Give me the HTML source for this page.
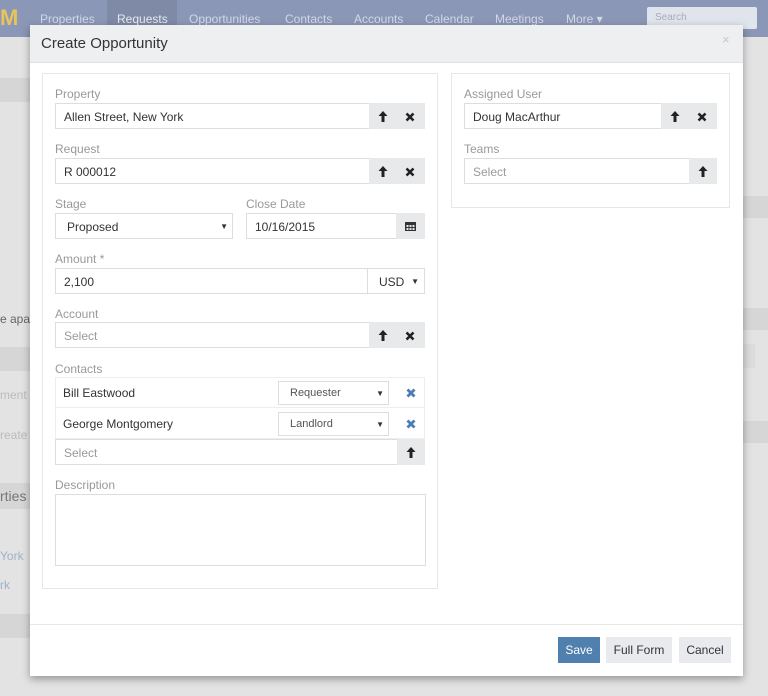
<!DOCTYPE html>
<html><head><style>
*{box-sizing:border-box;margin:0;padding:0}
body{width:768px;height:696px;overflow:hidden;background:#e3e3e3;font-family:"Liberation Sans",sans-serif;position:relative}
.a{position:absolute}
.nav{left:0;top:0;width:768px;height:37px;background:#8b97b6}
.nav span{position:absolute;top:12px;font-size:12px;color:#d3d8e6}
.lbl{position:absolute;font-size:12px;color:#999}
.inp{position:absolute;height:26px;border:1px solid #ddd;background:#fff;font-size:12px;color:#333;padding:6px 8px;white-space:nowrap}
.btn{position:absolute;height:26px;background:#e8e9eb}
.btn svg{position:absolute;top:8px}
.ph{color:#999}
</style></head><body>
<svg width="0" height="0" style="position:absolute"><defs>
<symbol id="up" viewBox="0 0 10 11"><path d="M5 0 L9.5 5 L6.5 5 L6.5 11 L3.5 11 L3.5 5 L0.5 5 Z" fill="#222"/></symbol>
<symbol id="x" viewBox="0 0 10 10"><path d="M1.5 1.5 L8.5 8.5 M8.5 1.5 L1.5 8.5" stroke="#222" stroke-width="2.6"/></symbol>
<symbol id="xb" viewBox="0 0 10 10"><path d="M1.5 1.5 L8.5 8.5 M8.5 1.5 L1.5 8.5" stroke="#4a7db3" stroke-width="2.8"/></symbol>
</defs></svg>
<div class="a nav">
<div class="a" style="left:0;top:5px;width:20px;height:26px;color:#e9c45a;font-weight:bold;font-size:22px">M</div>
<div class="a" style="left:107px;top:0;width:70px;height:37px;background:#7f8aa6"></div>
<span style="left:40px">Properties</span><span style="left:117px;color:#e6e9f0">Requests</span><span style="left:189px">Opportunities</span><span style="left:285px">Contacts</span><span style="left:354px">Accounts</span><span style="left:425px">Calendar</span><span style="left:495px">Meetings</span><span style="left:566px">More ▾</span>
<div class="a" style="left:647px;top:7px;width:110px;height:22px;background:#e0e4ec;border-radius:2px;font-size:10px;color:#aab;padding:5px 8px">Search</div>
</div>
<div class="a" style="left:0;top:78px;width:30px;height:24px;background:#d6d6d6"></div>
<div class="a" style="left:0;top:312px;font-size:12px;color:#666">e apar</div>
<div class="a" style="left:0;top:347px;width:30px;height:24px;background:#d6d6d6"></div>
<div class="a" style="left:0;top:388px;font-size:12px;color:#bbb">ment</div>
<div class="a" style="left:0;top:428px;font-size:12px;color:#bbb">reate</div>
<div class="a" style="left:0;top:483px;width:30px;height:26px;background:#d6d6d6;font-size:14px;color:#777;padding-top:5px">rties</div>
<div class="a" style="left:0;top:549px;font-size:12px;color:#9fb0c8">York</div>
<div class="a" style="left:0;top:578px;font-size:12px;color:#9fb0c8">rk</div>
<div class="a" style="left:0;top:614px;width:30px;height:24px;background:#d6d6d6"></div>
<div class="a" style="left:743px;top:196px;width:25px;height:22px;background:#d6d6d6"></div>
<div class="a" style="left:743px;top:308px;width:25px;height:22px;background:#d6d6d6"></div>
<div class="a" style="left:743px;top:344px;width:12px;height:24px;background:#dcdcdc"></div>
<div class="a" style="left:743px;top:421px;width:25px;height:22px;background:#d6d6d6"></div>

<div class="a" style="left:30px;top:25px;width:713px;height:651px;background:#fff;box-shadow:0 3px 8px rgba(0,0,0,.35)">
<div class="a" style="left:0;top:0;width:713px;height:38px;background:#eeeff0;border-bottom:1px solid #e2e2e2"></div>
<div class="a" style="left:11px;top:10px;font-size:15px;color:#333">Create Opportunity</div>
<div class="a" style="left:692px;top:7px;font-size:13px;color:#c8c8c8">×</div>
<div class="a" style="left:0;top:599px;width:713px;height:1px;background:#e8e8e8"></div>
<div class="a" style="left:528px;top:612px;width:42px;height:26px;background:#4f80ae;color:#fff;font-size:12px;text-align:center;line-height:26px">Save</div>
<div class="a" style="left:576px;top:612px;width:66px;height:26px;background:#e8eaed;color:#333;font-size:12px;text-align:center;line-height:26px">Full Form</div>
<div class="a" style="left:649px;top:612px;width:52px;height:26px;background:#e8eaed;color:#333;font-size:12px;text-align:center;line-height:26px">Cancel</div>
</div>

<div class="a" style="left:42px;top:73px;width:396px;height:516px;border:1px solid #e6e6e6;background:#fff"></div>
<div class="a" style="left:451px;top:73px;width:279px;height:135px;border:1px solid #e6e6e6;background:#fff"></div>

<div class="lbl" style="left:55px;top:87px">Property</div>
<div class="inp" style="left:55px;top:103px;width:315px">Allen Street, New York</div>
<div class="btn" style="left:369px;top:103px;width:56px"><svg style="left:9px" width="10" height="11"><use href="#up"/></svg><svg style="left:36px;top:9px" width="10" height="10"><use href="#x"/></svg></div>
<div class="lbl" style="left:55px;top:142px">Request</div>
<div class="inp" style="left:55px;top:158px;width:315px">R 000012</div>
<div class="btn" style="left:369px;top:158px;width:56px"><svg style="left:9px" width="10" height="11"><use href="#up"/></svg><svg style="left:36px;top:9px" width="10" height="10"><use href="#x"/></svg></div>
<div class="lbl" style="left:55px;top:197px">Stage</div>
<div class="inp" style="left:55px;top:213px;width:178px;padding-left:11px">Proposed<span style="position:absolute;right:4px;font-size:8px;top:8px">▼</span></div>
<div class="lbl" style="left:246px;top:197px">Close Date</div>
<div class="inp" style="left:246px;top:213px;width:151px">10/16/2015</div>
<div class="btn" style="left:396px;top:213px;width:29px"><svg style="left:9px;top:8px" width="11" height="10" viewBox="0 0 11 10"><rect x="0" y="1" width="11" height="9" fill="#333"/><g fill="#e8e9eb"><rect x="1.5" y="4" width="2" height="2"/><rect x="4.5" y="4" width="2" height="2"/><rect x="7.5" y="4" width="2" height="2"/><rect x="1.5" y="7" width="2" height="2"/><rect x="4.5" y="7" width="2" height="2"/><rect x="7.5" y="7" width="2" height="2"/></g></svg></div>
<div class="lbl" style="left:55px;top:252px">Amount *</div>
<div class="inp" style="left:55px;top:268px;width:313px">2,100</div>
<div class="inp" style="left:367px;top:268px;width:58px;padding-left:11px">USD<span style="position:absolute;right:5px;font-size:8px;top:8px">▼</span></div>
<div class="lbl" style="left:55px;top:307px">Account</div>
<div class="inp ph" style="left:55px;top:322px;width:315px">Select</div>
<div class="btn" style="left:369px;top:322px;width:56px"><svg style="left:9px" width="10" height="11"><use href="#up"/></svg><svg style="left:36px;top:9px" width="10" height="10"><use href="#x"/></svg></div>
<div class="lbl" style="left:55px;top:362px">Contacts</div>
<div class="a" style="left:55px;top:377px;width:370px;height:31px;border:1px solid #eee"></div>
<div class="a" style="left:55px;top:408px;width:370px;height:31px;border:1px solid #eee;border-top:none"></div>
<div class="a" style="left:63px;top:386px;font-size:12px;color:#333">Bill Eastwood</div>
<div class="a" style="left:63px;top:417px;font-size:12px;color:#333">George Montgomery</div>
<div class="inp" style="left:278px;top:381px;width:111px;height:24px;font-size:11px;padding:5px 11px;color:#555">Requester<span style="position:absolute;right:4px;font-size:8px;top:7px;color:#333">▼</span></div>
<div class="inp" style="left:278px;top:412px;width:111px;height:24px;font-size:11px;padding:5px 11px;color:#555">Landlord<span style="position:absolute;right:4px;font-size:8px;top:7px;color:#333">▼</span></div>
<svg class="a" style="left:406px;top:388px" width="10" height="10"><use href="#xb"/></svg>
<svg class="a" style="left:406px;top:419px" width="10" height="10"><use href="#xb"/></svg>
<div class="inp ph" style="left:55px;top:439px;width:343px">Select</div>
<div class="btn" style="left:397px;top:439px;width:28px"><svg style="left:9px" width="10" height="11"><use href="#up"/></svg></div>
<div class="lbl" style="left:55px;top:478px">Description</div>
<div class="inp" style="left:55px;top:494px;width:371px;height:72px"></div>

<div class="lbl" style="left:464px;top:87px">Assigned User</div>
<div class="inp" style="left:464px;top:103px;width:198px">Doug MacArthur</div>
<div class="btn" style="left:661px;top:103px;width:56px"><svg style="left:9px" width="10" height="11"><use href="#up"/></svg><svg style="left:36px;top:9px" width="10" height="10"><use href="#x"/></svg></div>
<div class="lbl" style="left:464px;top:142px">Teams</div>
<div class="inp ph" style="left:464px;top:158px;width:226px">Select</div>
<div class="btn" style="left:689px;top:158px;width:28px"><svg style="left:9px" width="10" height="11"><use href="#up"/></svg></div>
</body></html>
